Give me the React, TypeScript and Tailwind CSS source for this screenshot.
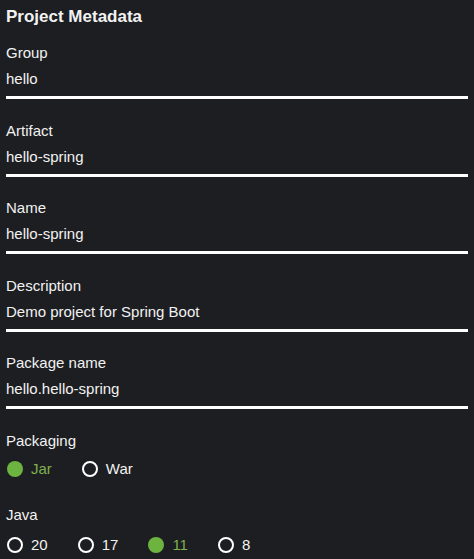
const fields = [
  { label: "Group", value: "hello" },
  { label: "Artifact", value: "hello-spring" },
  { label: "Name", value: "hello-spring" },
  { label: "Description", value: "Demo project for Spring Boot" },
  { label: "Package name", value: "hello.hello-spring" },
];

function Radio({ label, checked }: { label: string; checked?: boolean }) {
  return (
    <div className="flex items-center gap-2">
      {checked ? (
        <span className="w-4 h-4 rounded-full bg-[#6db33f]" />
      ) : (
        <span className="w-4 h-4 rounded-full border-2 border-white" />
      )}
      <span className={checked ? "text-[#7fb04f]" : "text-[#f2f2f2]"}>{label}</span>
    </div>
  );
}

export default function App() {
  return (
    <div
      className="w-[474px] h-[559px] bg-[#1c1e21] text-[#f2f2f2] pl-[6px] pr-[6px] pt-[5px] overflow-hidden"
      style={{ fontFamily: '"Liberation Sans", Arial, sans-serif' }}
    >
      <h1 className="text-[17px] font-bold leading-6">Project Metadata</h1>

      <div className="mt-[11px] flex flex-col gap-[18.6px]">
        {fields.map((f) => (
          <div key={f.label}>
            <div className="text-[15px] leading-[26px]">{f.label}</div>
            <div className="text-[15px] leading-[26px]">{f.value}</div>
            <div className="mt-1 h-[3px] bg-white" />
          </div>
        ))}
      </div>

      <div className="mt-[19px] text-[15px]">
        <div className="leading-[26px]">Packaging</div>
        <div className="mt-[2px] h-[26px] flex items-center gap-[30px] pl-px">
          <Radio label="Jar" checked />
          <Radio label="War" />
        </div>
      </div>

      <div className="mt-[20px] text-[15px]">
        <div className="leading-[26px]">Java</div>
        <div className="mt-[4px] h-[26px] flex items-center gap-[30px] pl-px">
          <Radio label="20" />
          <Radio label="17" />
          <Radio label="11" checked />
          <Radio label="8" />
        </div>
      </div>
    </div>
  );
}
